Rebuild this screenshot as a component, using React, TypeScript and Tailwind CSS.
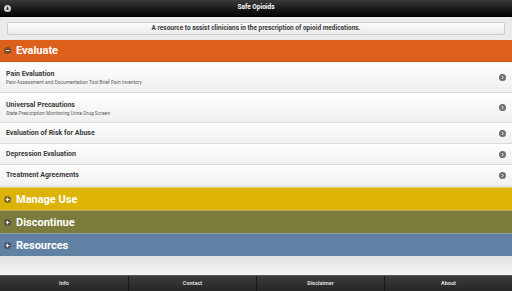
import React from 'react';

type Item = { title: string; sub?: string; h: string };

const items: Item[] = [
  { title: 'Pain Evaluation', sub: 'Pain Assessment and Documentation Tool Brief Pain Inventory', h: 'h-[31px]' },
  { title: 'Universal Precautions', sub: 'State Prescription Monitoring Urine Drug Screen', h: 'h-[30px]' },
  { title: 'Evaluation of Risk for Abuse', h: 'h-[21px]' },
  { title: 'Depression Evaluation', h: 'h-[21px]' },
  { title: 'Treatment Agreements', h: 'h-[22px]' },
];

const SectionIcon = ({ open }: { open: boolean }) => (
  <span className="w-[7px] h-[7px] rounded-full bg-[#3a3a3a]/60 flex items-center justify-center shrink-0">
    <svg width="5" height="5" viewBox="0 0 10 10">
      <rect x="1.5" y="4" width="7" height="2" fill="#fff" />
      {!open && <rect x="4" y="1.5" width="2" height="7" fill="#fff" />}
    </svg>
  </span>
);

const Section = ({ label, bg, open, border }: { label: string; bg: string; open?: boolean; border: string }) => (
  <div className={`h-[23px] flex items-center gap-[5px] px-[4px] border-t ${bg} ${border}`}>
    <SectionIcon open={!!open} />
    <span className="text-[11px] font-bold text-white leading-none">{label}</span>
  </div>
);

const Chevron = () => (
  <span className="w-[7px] h-[7px] rounded-full bg-[#6e6e6e] flex items-center justify-center shrink-0">
    <svg width="5" height="5" viewBox="0 0 10 10">
      <path d="M3.5 2 L6.5 5 L3.5 8" stroke="#fff" strokeWidth="2" fill="none" />
    </svg>
  </span>
);

export default function App() {
  return (
    <div className="w-[512px] h-[291px] overflow-hidden flex flex-col bg-[#ececec]" style={{ fontFamily: 'Roboto, "Liberation Sans", sans-serif' }}>
      <div className="h-[17px] shrink-0 relative flex items-center justify-center bg-gradient-to-b from-[#3a3a3a] to-[#050505] border-b border-[#000]">
        <span className="absolute left-[4px] top-[5px] w-[7px] h-[7px] rounded-full bg-[#cfcfcf] flex items-center justify-center">
          <svg width="5" height="5" viewBox="0 0 10 10">
            <path d="M5 1.5 V7 M2.8 5 L5 7.8 L7.2 5" stroke="#222" strokeWidth="1.8" fill="none" />
          </svg>
        </span>
        <span className="text-[6.5px] font-bold text-white">Safe Opioids</span>
      </div>

      <div className="h-[23px] shrink-0 px-[7px] flex items-center bg-[#ebebeb]">
        <div className="w-full h-[13px] flex items-center justify-center border border-[#cdcdcd] rounded-[2px] bg-gradient-to-b from-[#fbfbfb] to-[#ececec]">
          <span className="text-[6.5px] font-bold text-[#3a3a3a]">A resource to assist clinicians in the prescription of opioid medications.</span>
        </div>
      </div>

      <div className="h-[22px] shrink-0 flex items-center gap-[5px] px-[4px] bg-[#dc5f1c] border-b border-[#c9540f]">
        <SectionIcon open />
        <span className="text-[11px] font-bold text-white leading-none">Evaluate</span>
      </div>

      {items.map((it) => (
        <div key={it.title} className={`${it.h} shrink-0 flex items-center pl-[6px] pr-[6px] border-b border-[#dcdcdc] bg-gradient-to-b from-[#ffffff] to-[#f0f0f0]`}>
          <div className={`flex-1 flex flex-col gap-[2px] ${it.sub ? 'pt-[2px]' : ''}`}>
            <span className="text-[7px] font-bold text-[#3a3a3a] leading-none">{it.title}</span>
            {it.sub && <span className="text-[4.9px] text-[#5a5a5a] leading-none">{it.sub}</span>}
          </div>
          <Chevron />
        </div>
      ))}

      <Section label="Manage Use" bg="bg-[#ddb306]" border="border-[#ecd37a]" />
      <Section label="Discontinue" bg="bg-[#7b7b3c]" border="border-[#b0a96a]" />
      <Section label="Resources" bg="bg-[#6181a4]" border="border-[#8ea2b2]" />

      <div className="h-[19px] shrink-0 bg-gradient-to-b from-[#e2e2e2] to-[#f4f4f4]" />

      <div className="h-[16px] shrink-0 grid grid-cols-4 bg-gradient-to-b from-[#3c3c3c] to-[#262626] border-t border-[#555]">
        {['Info', 'Contact', 'Disclaimer', 'About'].map((t, i) => (
          <div key={t} className={`flex items-center justify-center ${i > 0 ? 'border-l border-[#1a1a1a]' : ''}`}>
            <span className="text-[5.5px] font-bold text-[#ddd]">{t}</span>
          </div>
        ))}
      </div>
    </div>
  );
}
